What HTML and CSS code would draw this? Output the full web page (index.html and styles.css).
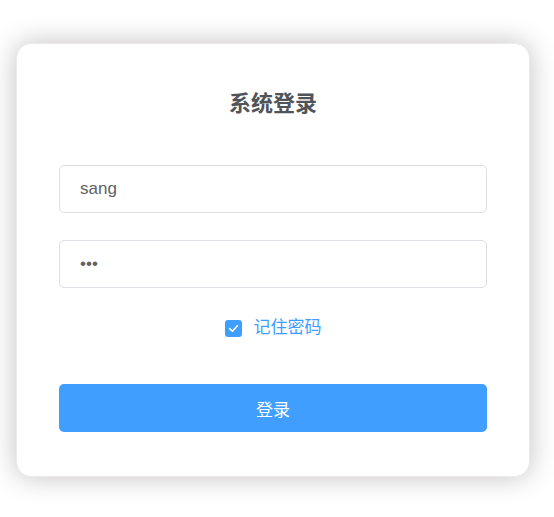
FILE: index.html
```html
<!DOCTYPE html>
<html lang="zh-CN">
<head>
<meta charset="utf-8">
<title>系统登录</title>
<link rel="stylesheet" href="styles.css">
</head>
<body>
<div class="page">
  <div class="login-card">
    <h3 class="title">系统登录</h3>
    <div class="field"><input class="input" type="text" value="sang"></div>
    <div class="field second"><input class="input" type="password" value="123"></div>
    <div class="remember">
      <span class="box">
        <svg width="17" height="17" viewBox="0 0 17 17"><path d="M4.6 8.6 L7.4 11.2 L12.4 5.8" fill="none" stroke="#fff" stroke-width="1.6" stroke-linecap="round" stroke-linejoin="round"/></svg>
      </span>
      <span class="label">记住密码</span>
    </div>
    <button class="btn" type="button">登录</button>
  </div>
</div>
</body>
</html>
```
FILE: styles.css
```css
html, body {
  margin: 0;
  padding: 0;
  background: #fff;
}
body {
  font-family: "Liberation Sans", "Noto Sans CJK SC", sans-serif;
}
.page {
  min-height: 517px;
  padding-top: 43px;
  box-sizing: border-box;
}
.login-card {
  box-sizing: border-box;
  width: 514px;
  margin: 0 0 0 16px;
  padding: 0 42px 44px 42px;
  background: #fff;
  border: 1px solid #eaeaea;
  border-radius: 15px;
  box-shadow: 0 0 28px #c4c0c0;
}
.title {
  margin: 47px 0 48px 0;
  height: 26px;
  line-height: 26px;
  text-align: center;
  font-size: 22px;
  font-weight: bold;
  color: #505458;
}
.field {
  height: 48px;
}
.field.second {
  margin-top: 27px;
}
.input {
  box-sizing: border-box;
  width: 100%;
  height: 48px;
  padding: 0 18px 0 20px;
  border: 1px solid #dcdfe6;
  border-radius: 5px;
  outline: none;
  font-family: "Liberation Sans", "Noto Sans CJK SC", sans-serif;
  font-size: 17px;
  color: #606266;
  background: #fff;
}
.remember {
  margin-top: 30px;
  height: 20px;
  display: flex;
  justify-content: center;
  align-items: center;
  gap: 12px;
}
.box {
  width: 17px;
  height: 17px;
  background: #409eff;
  border-radius: 3px;
  display: flex;
}
.label {
  font-size: 17px;
  line-height: 20px;
  color: #409eff;
}
.btn {
  display: block;
  box-sizing: border-box;
  width: 100%;
  height: 48px;
  margin-top: 46px;
  border: none;
  border-radius: 5px;
  background: #409eff;
  color: #fff;
  font-family: "Liberation Sans", "Noto Sans CJK SC", sans-serif;
  font-size: 17px;
  cursor: pointer;
}
```
